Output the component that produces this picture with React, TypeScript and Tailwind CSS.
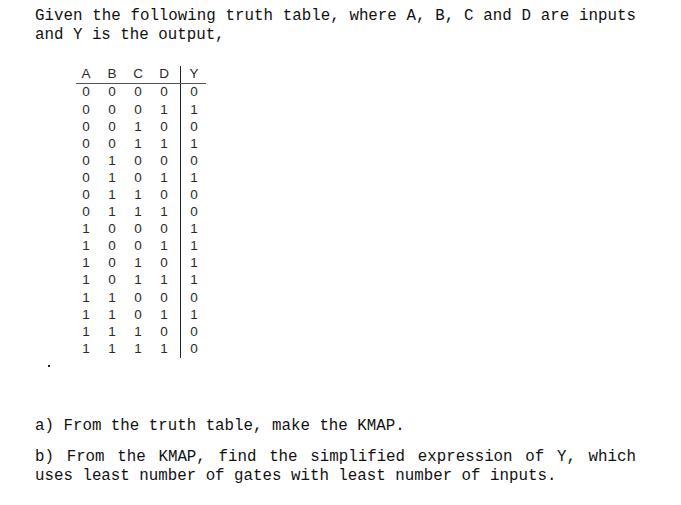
import React from "react";

const rows: string[] = [
  "00000",
  "00011",
  "00100",
  "00111",
  "01000",
  "01011",
  "01100",
  "01110",
  "10001",
  "10011",
  "10101",
  "10111",
  "11000",
  "11011",
  "11100",
  "11110",
];

function Row({ cells }: { cells: string[] }) {
  return (
    <div className="flex h-[17.1px] items-center">
      <div className="flex w-[107px] pl-[73px] box-content">
        <span className="w-[26px] text-center">{cells[0]}</span>
        <span className="w-[26px] text-center">{cells[1]}</span>
        <span className="w-[26px] text-center">{cells[2]}</span>
        <span className="w-[26px] text-center">{cells[3]}</span>
      </div>
      <div className="h-full border-l border-[#222] w-[27px] text-center flex items-center justify-center">
        {cells[4]}
      </div>
    </div>
  );
}

export default function App() {
  return (
    <div className="w-[681px] h-[505px] bg-white text-[#111] overflow-hidden">
      <div className="pl-[35px] pt-[7px] w-[636px]">
        <p
          className="text-[15.8px] leading-[19px] text-justify"
          style={{ fontFamily: '"Liberation Mono", "Courier New", monospace' }}
        >
          Given the following truth table, where A, B, C and D are inputs and Y is the output,
        </p>
      </div>

      <div
        className="mt-[21px] text-[13.5px] text-[#2a2a2a]"
        style={{ fontFamily: '"Liberation Sans", Arial, sans-serif' }}
      >
        <div className="flex h-[17px] items-center">
          <div className="flex w-[107px] pl-[73px] box-content">
            <span className="w-[26px] text-center">A</span>
            <span className="w-[26px] text-center">B</span>
            <span className="w-[26px] text-center">C</span>
            <span className="w-[26px] text-center">D</span>
          </div>
          <div className="h-full border-l border-[#222] w-[27px] text-center flex items-center justify-center">
            Y
          </div>
        </div>
        <div className="ml-[76px] w-[130px] h-px bg-[#555]" />
        {rows.map((r, i) => (
          <Row key={i} cells={r.split("")} />
        ))}
      </div>

      <div className="ml-[48px] mt-[7px] w-[2px] h-[2px] bg-[#222]" />

      <div
        className="pl-[35px] w-[636px] mt-[50px] text-[15.8px] leading-[19px]"
        style={{ fontFamily: '"Liberation Mono", "Courier New", monospace' }}
      >
        <p>a) From the truth table, make the KMAP.</p>
        <p className="mt-[12px] text-justify">
          b) From the KMAP, find the simplified expression of Y, which uses least number of gates with least number of inputs.
        </p>
      </div>
    </div>
  );
}
